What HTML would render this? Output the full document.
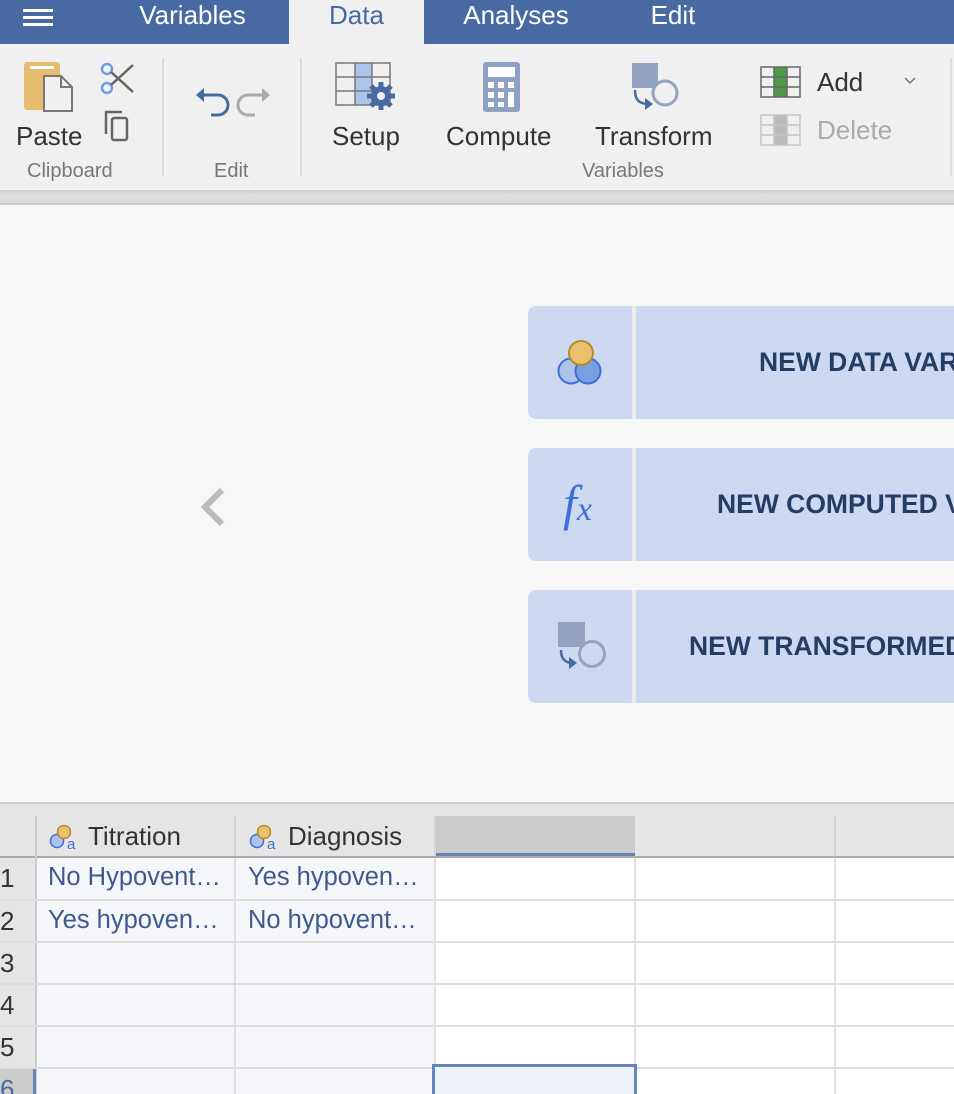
<!DOCTYPE html>
<html><head><meta charset="utf-8"><style>
*{margin:0;padding:0;box-sizing:border-box}
html,body{width:954px;height:1094px;overflow:hidden}
body{background:#f7f7f7;font-family:"Liberation Sans",sans-serif;position:relative}
.abs{position:absolute}
.top{left:0;top:0;width:954px;height:44px;background:#476aa2}
.tab{position:absolute;top:0;height:44px;line-height:30px;color:#fff;font-size:26px;text-align:center}
.rib{left:0;top:44px;width:954px;height:146px;background:#f0f0f0}
.lbl{position:absolute;font-size:26px;color:#333;white-space:nowrap}
.glbl{position:absolute;font-size:20px;color:#777;top:160px}
.sep{position:absolute;width:2px;background:#dcdcdc;top:58px;height:118px}
.card{position:absolute;left:528px;width:426px;height:113px;background:#ccd9f0;border-radius:8px 0 0 8px;overflow:hidden}
.card .div{position:absolute;left:104px;top:0;width:4px;height:113px;background:#ececec}
.card .t{position:absolute;top:0;line-height:113px;font-weight:bold;font-size:26.5px;color:#233d64;white-space:nowrap}
.hd{position:absolute;top:816px;height:40px;background:#e5e5e5}
.cell{position:absolute;font-size:25.5px;color:#3d5a8f;white-space:nowrap}
.rn{position:absolute;left:0;width:35px;font-size:26px;color:#333}
</style></head><body>
<div class="abs top"></div>
<div class="abs" style="left:23px;top:9px;width:30px;height:3px;background:#fff"></div>
<div class="abs" style="left:23px;top:16px;width:30px;height:3px;background:#fff"></div>
<div class="abs" style="left:23px;top:23px;width:30px;height:3px;background:#fff"></div>
<div class="tab" style="left:120px;width:145px">Variables</div>
<div class="tab" style="left:289px;width:135px;background:#f0f0f0;color:#476aa2">Data</div>
<div class="tab" style="left:446px;width:140px">Analyses</div>
<div class="tab" style="left:630px;width:86px">Edit</div>
<div class="abs rib"></div>
<div class="abs" style="left:0;top:190px;width:954px;height:15px;background:linear-gradient(#cfcfcf,#dedede 30%,#dcdcdc);border-bottom:2px solid #ccc"></div>

<svg class="abs" style="left:22px;top:60px" width="56" height="56"><rect x="2" y="2" width="36" height="48" rx="3" fill="#e6bd6e"/><rect x="8" y="6" width="24" height="3" fill="#fff"/><path d="M22 16h17l11 11v24H22z" fill="#f0f0f0" stroke="#777" stroke-width="2"/><path d="M39 16v11h11" fill="none" stroke="#777" stroke-width="2"/></svg>
<div class="lbl" style="left:16px;top:121px">Paste</div>
<svg class="abs" style="left:100px;top:62px" width="36" height="34"><circle cx="7" cy="7" r="5" fill="none" stroke="#6f9ee8" stroke-width="2.5"/><circle cx="7" cy="26" r="5" fill="none" stroke="#6f9ee8" stroke-width="2.5"/><path d="M11 10L33 30M11 23L33 3" stroke="#666" stroke-width="2.5"/></svg>
<svg class="abs" style="left:103px;top:110px" width="30" height="32"><path d="M3 24V2h16" fill="none" stroke="#666" stroke-width="2.5"/><rect x="9" y="8" width="15" height="22" rx="2" fill="none" stroke="#666" stroke-width="2.5"/></svg>
<div class="glbl" style="left:27px">Clipboard</div>
<div class="sep" style="left:162px"></div>
<svg class="abs" style="left:193px;top:86px" width="80" height="34"><path d="M5 9h20a10 10 0 0 1 0 20h-7" fill="none" stroke="#476aa2" stroke-width="3"/><path d="M3 9l8-7v14z" fill="#476aa2"/><path d="M75 9H55a10 10 0 0 0 0 20h7" fill="none" stroke="#aaa" stroke-width="3"/><path d="M77 9l-8-7v14z" fill="#aaa"/></svg>
<div class="glbl" style="left:214px">Edit</div>
<div class="sep" style="left:300px"></div>
<svg class="abs" style="left:335px;top:62px" width="64" height="52"><rect x="20" y="1" width="17" height="42" fill="#aec3ea"/><g stroke="#777" stroke-width="1.5" fill="none"><rect x="1" y="1" width="54" height="42"/><path d="M20 1v42M37 1v42M1 15h54M1 29h54"/></g><circle cx="46" cy="34" r="10" fill="#476aa2"/><g stroke="#476aa2" stroke-width="5"><path d="M46 20v28M32 34h28M36 24l20 20M56 24l-20 20"/></g><circle cx="46" cy="34" r="4" fill="#f0f0f0"/></svg>
<div class="lbl" style="left:332px;top:121px">Setup</div>
<svg class="abs" style="left:482px;top:62px" width="38" height="50"><rect x="1" y="0" width="37" height="50" rx="3" fill="#8fa1c2"/><rect x="6" y="5" width="27" height="10" fill="#fff"/><g fill="#fff"><rect x="6" y="20" width="6" height="6"/><rect x="16" y="20" width="6" height="6"/><rect x="26" y="20" width="6" height="6"/><rect x="6" y="30" width="6" height="6"/><rect x="16" y="30" width="6" height="6"/><rect x="26" y="30" width="6" height="15"/><rect x="6" y="40" width="6" height="5"/><rect x="16" y="40" width="6" height="5"/></g></svg>
<div class="lbl" style="left:446px;top:121px">Compute</div>
<svg class="abs" style="left:630px;top:62px" width="52" height="50"><rect x="2" y="1" width="26" height="25" fill="#93a3c0"/><circle cx="35" cy="31" r="12" fill="#f0f0f0" stroke="#93a3c0" stroke-width="3"/><path d="M5 28c0 10 4 14 14 14" fill="none" stroke="#476aa2" stroke-width="2.5"/><path d="M15 36l8 6-8 6z" fill="#476aa2"/></svg>
<div class="lbl" style="left:595px;top:121px">Transform</div>
<div class="glbl" style="left:582px">Variables</div>
<svg class="abs" style="left:760px;top:66px" width="42" height="32"><rect x="14" y="1" width="13" height="30" fill="#4e9a47"/><g stroke="#666" stroke-width="1.5" fill="none"><rect x="1" y="1" width="39" height="30"/><path d="M14 1v30M27 1v30M1 11h39M1 21h39"/></g></svg>
<div class="lbl" style="left:817px;top:67px">Add</div>
<svg class="abs" style="left:903px;top:76px" width="14" height="10"><path d="M2 2l5 5 5-5" fill="none" stroke="#777" stroke-width="1.5"/></svg>
<svg class="abs" style="left:760px;top:114px" width="42" height="32"><rect x="14" y="1" width="13" height="30" fill="#bbb"/><g stroke="#c4c4c4" stroke-width="1.5" fill="none"><rect x="1" y="1" width="39" height="30"/><path d="M14 1v30M27 1v30M1 11h39M1 21h39"/></g></svg>
<div class="lbl" style="left:817px;top:115px;color:#aaa">Delete</div>
<div class="sep" style="left:950px;top:58px"></div>

<svg class="abs" style="left:195px;top:484px" width="40" height="46"><path d="M27 6L10 23l17 17" fill="none" stroke="#bbb" stroke-width="6"/></svg>

<div class="card" style="top:306px"><div class="div"></div><div class="t" style="left:231px">NEW DATA VARIABLE</div>
<svg class="abs" style="left:28px;top:34px" width="50" height="50"><circle cx="15" cy="31" r="12.5" fill="#aec3ea" stroke="#3f6fd8" stroke-width="2"/><circle cx="32" cy="31" r="12.5" fill="#7a9fe0" stroke="#3f6fd8" stroke-width="2"/><circle cx="25" cy="13" r="12" fill="#e9c06d" stroke="#b98a2c" stroke-width="2"/></svg></div>
<div class="card" style="top:448px"><div class="div"></div><div class="t" style="left:189px">NEW COMPUTED VARIABLE</div>
<div class="abs" style="left:35px;top:26px;font-family:'Liberation Serif',serif;font-style:italic;font-size:50px;color:#3f6fd8">f<span style="font-size:34px">x</span></div></div>
<div class="card" style="top:590px"><div class="div"></div><div class="t" style="left:161px">NEW TRANSFORMED VARIABLE</div>
<svg class="abs" style="left:26px;top:30px" width="56" height="54"><rect x="4" y="2" width="27" height="25" fill="#93a3c0"/><circle cx="38" cy="34" r="12.5" fill="#ccd9f0" stroke="#93a3c0" stroke-width="3"/><path d="M7 30c0 9 4 13 12 13" fill="none" stroke="#476aa2" stroke-width="2.5"/><path d="M15 37l8 6-8 6z" fill="#476aa2"/></svg></div>

<div class="abs" style="left:0;top:802px;width:954px;height:14px;background:#e5e5e5;border-top:2px solid #ccc"></div>
<div class="hd" style="left:0;width:954px"></div>
<div class="abs" style="left:435px;top:816px;width:200px;height:40px;background:#cbcbcb;border-bottom:3px solid #6585b8"></div>
<div class="abs" style="left:0;top:856px;width:954px;height:2px;background:#aaa"></div>
<div class="abs" style="left:35px;top:816px;width:2px;height:278px;background:#ccc"></div>
<div class="abs" style="left:234px;top:816px;width:2px;height:40px;background:#d5d5d5"></div>
<div class="abs" style="left:434px;top:816px;width:2px;height:40px;background:#d5d5d5"></div>
<div class="abs" style="left:834px;top:816px;width:2px;height:40px;background:#d5d5d5"></div>
<svg class="abs" style="left:48px;top:822px" width="32" height="28"><circle cx="9" cy="19" r="6.5" fill="#aec3ea" stroke="#3f6fd8" stroke-width="1.5"/><circle cx="16" cy="10" r="6.5" fill="#e9c06d" stroke="#b98a2c" stroke-width="1.5"/><text x="19" y="27" font-family="Liberation Sans" font-size="15" fill="#3f6fd8">a</text></svg>
<div class="abs" style="left:88px;top:816px;line-height:40px;font-size:26px;color:#333">Titration</div>
<svg class="abs" style="left:248px;top:822px" width="32" height="28"><circle cx="9" cy="19" r="6.5" fill="#aec3ea" stroke="#3f6fd8" stroke-width="1.5"/><circle cx="16" cy="10" r="6.5" fill="#e9c06d" stroke="#b98a2c" stroke-width="1.5"/><text x="19" y="27" font-family="Liberation Sans" font-size="15" fill="#3f6fd8">a</text></svg>
<div class="abs" style="left:288px;top:816px;line-height:40px;font-size:26px;color:#333">Diagnosis</div>

<div class="abs" style="left:0;top:858px;width:35px;height:236px;background:#e5e5e5"></div>
<div class="abs" style="left:37px;top:858px;width:398px;height:236px;background:#f4f6fa"></div>
<div class="abs" style="left:435px;top:858px;width:519px;height:236px;background:#fff"></div>
<div class="abs" style="left:234px;top:858px;width:2px;height:236px;background:#e0e0e0"></div>
<div class="abs" style="left:434px;top:858px;width:2px;height:236px;background:#e0e0e0"></div>
<div class="abs" style="left:634px;top:858px;width:2px;height:236px;background:#e0e0e0"></div>
<div class="abs" style="left:834px;top:858px;width:2px;height:236px;background:#e0e0e0"></div>
<div class="abs" style="left:0;top:899px;width:954px;height:2px;background:#dedede"></div>
<div class="abs" style="left:0;top:941px;width:954px;height:2px;background:#dedede"></div>
<div class="abs" style="left:0;top:983px;width:954px;height:2px;background:#dedede"></div>
<div class="abs" style="left:0;top:1025px;width:954px;height:2px;background:#dedede"></div>
<div class="abs" style="left:0;top:1067px;width:954px;height:2px;background:#dedede"></div>
<div class="abs" style="left:0;top:1069px;width:33px;height:25px;background:#ccc"></div>
<div class="abs" style="left:33px;top:1069px;width:3px;height:25px;background:#6585b8"></div>
<div class="abs" style="left:432px;top:1064px;width:205px;height:30px;border:3px solid #6585b8;border-bottom:none;background:#eef2fa"></div>

<div class="rn" style="top:863px">1</div>
<div class="rn" style="top:906px">2</div>
<div class="rn" style="top:948px">3</div>
<div class="rn" style="top:990px">4</div>
<div class="rn" style="top:1032px">5</div>
<div class="rn" style="top:1074px;color:#476aa2">6</div>
<div class="cell" style="left:48px;top:863px">No Hypovent…</div>
<div class="cell" style="left:248px;top:863px">Yes hypoven…</div>
<div class="cell" style="left:48px;top:906px">Yes hypoven…</div>
<div class="cell" style="left:248px;top:906px">No hypovent…</div>
</body></html>
